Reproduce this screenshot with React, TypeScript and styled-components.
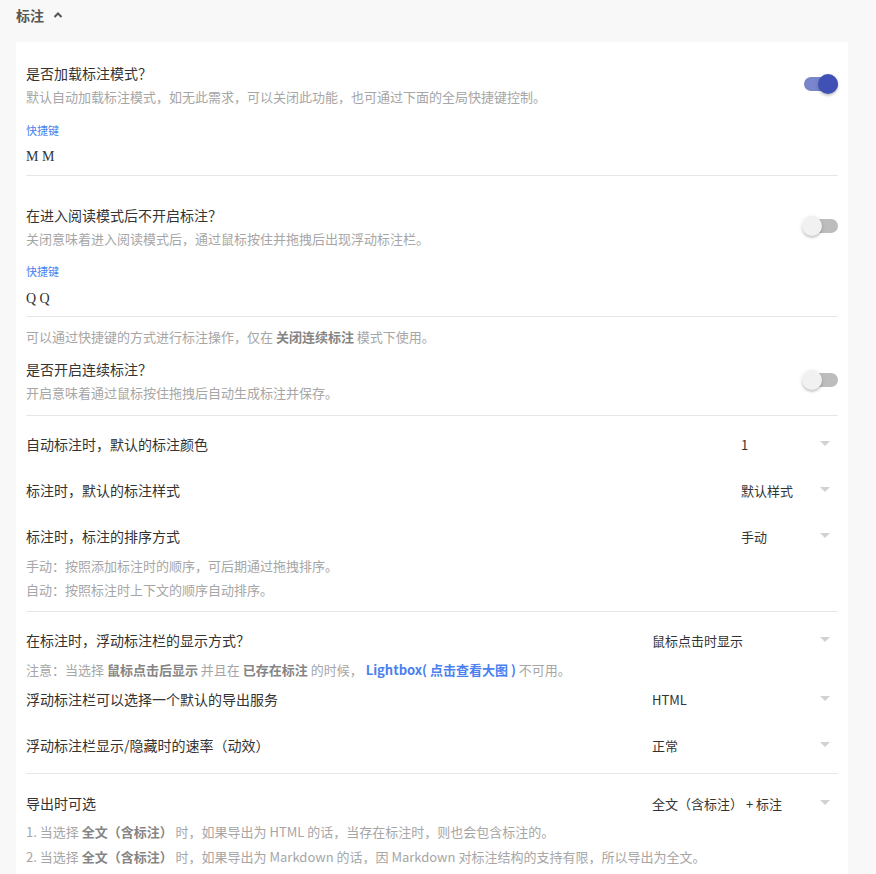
import React from "react";
import styled, { createGlobalStyle } from "styled-components";

const GlobalStyle = createGlobalStyle`
    html, body {
        margin: 0;
        padding: 0;
        background: #f8f8f8;
    }
    body {
        font-family: "Microsoft YaHei", "Noto Sans CJK SC", "Noto Sans", sans-serif;
        color: #333;
        -webkit-font-smoothing: antialiased;
    }
`;

const Page = styled.div`
    width: 876px;
    height: 874px;
    overflow: hidden;
    padding: 0 28px 0 16px;
    box-sizing: border-box;
`;

const Header = styled.div`
    height: 30px;
    display: flex;
    align-items: center;
    gap: 9px;
    font-size: 14px;
    font-weight: bold;
    color: #555;
`;

const Card = styled.div`
    margin-top: 12px;
    background: #fff;
    padding: 0 10px;
`;

const Section = styled.div<{ $top: number; $bottom: number }>`
    padding-top: ${(p) => p.$top}px;
    padding-bottom: ${(p) => p.$bottom}px;
    border-bottom: 1px solid #e6e6e6;
`;

const LastSection = styled.div<{ $top: number }>`
    padding-top: ${(p) => p.$top}px;
`;

const SwitchRow = styled.div<{ $mt?: number }>`
    display: flex;
    align-items: center;
    justify-content: space-between;
    margin-top: ${(p) => p.$mt ?? 0}px;
`;

const Title = styled.div`
    font-size: 14px;
    line-height: 20px;
    color: #333;
`;

const Desc = styled.div<{ $mt?: number; $lh?: number }>`
    font-size: 13px;
    line-height: ${(p) => p.$lh ?? 20}px;
    margin-top: ${(p) => p.$mt ?? 0}px;
    color: #a6a6a6;
    white-space: nowrap;

    b {
        color: #858585;
        font-weight: bold;
    }
`;

const Link = styled.span`
    color: #4a7ff0;
    font-weight: bold;
`;

const ShortcutLabel = styled.div<{ $mt: number }>`
    margin-top: ${(p) => p.$mt}px;
    font-size: 11px;
    line-height: 16px;
    color: #4a7ff0;
`;

const ShortcutValue = styled.div<{ $mt: number }>`
    margin-top: ${(p) => p.$mt}px;
    font-family: "Liberation Serif", "Times New Roman", serif;
    font-size: 14px;
    line-height: 20px;
    color: #333;
`;

const SwitchBox = styled.div`
    position: relative;
    width: 36px;
    height: 20px;
    flex-shrink: 0;
    margin-top: -2px;
`;

const Track = styled.div<{ $on: boolean }>`
    position: absolute;
    left: 2px;
    top: 3px;
    width: 34px;
    height: 14px;
    border-radius: 7px;
    background: ${(p) => (p.$on ? "#7986cb" : "#bdbdbd")};
`;

const Thumb = styled.div<{ $on: boolean }>`
    position: absolute;
    top: 0;
    left: ${(p) => (p.$on ? 16 : 0)}px;
    width: 20px;
    height: 20px;
    border-radius: 50%;
    background: ${(p) => (p.$on ? "#3f51b5" : "#f1f1f1")};
    box-shadow: 0 2px 2px rgba(0, 0, 0, 0.14), 0 1px 4px rgba(0, 0, 0, 0.12);
`;

const Switch = ({ on }: { on: boolean }) => (
    <SwitchBox>
        <Track $on={on} />
        <Thumb $on={on} />
    </SwitchBox>
);

const SelectRow = styled.div<{ $mt?: number }>`
    height: 36px;
    display: flex;
    align-items: center;
    justify-content: space-between;
    margin-top: ${(p) => p.$mt ?? 0}px;
`;

const SelectBox = styled.div<{ $w: number }>`
    width: ${(p) => p.$w}px;
    height: 36px;
    display: flex;
    align-items: center;
    justify-content: space-between;
    font-size: 13px;
    color: #333;
    padding-right: 8px;
    box-sizing: border-box;
`;

const Caret = styled.span`
    width: 0;
    height: 0;
    margin-top: -1px;
    border-left: 5px solid transparent;
    border-right: 5px solid transparent;
    border-top: 5px solid #d2d2d2;
`;

const Select = ({ value, wide }: { value: string; wide?: boolean }) => (
    <SelectBox $w={wide ? 186 : 97}>
        <span>{value}</span>
        <Caret />
    </SelectBox>
);

const ChevronUp = () => (
    <svg width="10" height="8" viewBox="0 0 10 8">
        <path d="M1.5 6 L5 2.5 L8.5 6" fill="none" stroke="#555" strokeWidth="2" />
    </svg>
);

export default function App() {
    return (
        <>
            <GlobalStyle />
            <Page>
                <Header>
                    标注 <ChevronUp />
                </Header>
                <Card>
                    <Section $top={21} $bottom={8}>
                        <SwitchRow>
                            <div>
                                <Title>是否加载标注模式？</Title>
                                <Desc $mt={4}>
                                    默认自动加载标注模式，如无此需求，可以关闭此功能，也可通过下面的全局快捷键控制。
                                </Desc>
                            </div>
                            <Switch on />
                        </SwitchRow>
                        <ShortcutLabel $mt={15}>快捷键</ShortcutLabel>
                        <ShortcutValue $mt={9}>M M</ShortcutValue>
                    </Section>

                    <Section $top={29} $bottom={7}>
                        <SwitchRow>
                            <div>
                                <Title>在进入阅读模式后不开启标注？</Title>
                                <Desc $mt={4}>关闭意味着进入阅读模式后，通过鼠标按住并拖拽后出现浮动标注栏。</Desc>
                            </div>
                            <Switch on={false} />
                        </SwitchRow>
                        <ShortcutLabel $mt={14}>快捷键</ShortcutLabel>
                        <ShortcutValue $mt={10}>Q Q</ShortcutValue>
                    </Section>

                    <Section $top={10} $bottom={12}>
                        <Desc>
                            可以通过快捷键的方式进行标注操作，仅在 <b>关闭连续标注</b> 模式下使用。
                        </Desc>
                        <SwitchRow $mt={12}>
                            <div>
                                <Title>是否开启连续标注？</Title>
                                <Desc $mt={4}>开启意味着通过鼠标按住拖拽后自动生成标注并保存。</Desc>
                            </div>
                            <Switch on={false} />
                        </SwitchRow>
                    </Section>

                    <Section $top={10} $bottom={9}>
                        <SelectRow>
                            <Title>自动标注时，默认的标注颜色</Title>
                            <Select value="1" />
                        </SelectRow>
                        <SelectRow $mt={10}>
                            <Title>标注时，默认的标注样式</Title>
                            <Select value="默认样式" />
                        </SelectRow>
                        <SelectRow $mt={10}>
                            <Title>标注时，标注的排序方式</Title>
                            <Select value="手动" />
                        </SelectRow>
                        <Desc $lh={24}>手动：按照添加标注时的顺序，可后期通过拖拽排序。</Desc>
                        <Desc $lh={24}>自动：按照标注时上下文的顺序自动排序。</Desc>
                    </Section>

                    <Section $top={10} $bottom={10}>
                        <SelectRow>
                            <Title>在标注时，浮动标注栏的显示方式？</Title>
                            <Select value="鼠标点击时显示" wide />
                        </SelectRow>
                        <Desc $mt={2}>
                            注意：当选择 <b>鼠标点击后显示</b> 并且在 <b>已存在标注</b> 的时候，{" "}
                            <Link>Lightbox( 点击查看大图 )</Link> 不可用。
                        </Desc>
                        <SelectRow $mt={1}>
                            <Title>浮动标注栏可以选择一个默认的导出服务</Title>
                            <Select value="HTML" wide />
                        </SelectRow>
                        <SelectRow $mt={10}>
                            <Title>浮动标注栏显示/隐藏时的速率（动效）</Title>
                            <Select value="正常" wide />
                        </SelectRow>
                    </Section>

                    <LastSection $top={11}>
                        <SelectRow>
                            <Title>导出时可选</Title>
                            <Select value="全文（含标注） + 标注" wide />
                        </SelectRow>
                        <Desc $lh={25} $mt={-2}>
                            1. 当选择 <b>全文（含标注）</b> 时，如果导出为 HTML 的话，当存在标注时，则也会包含标注的。
                        </Desc>
                        <Desc $lh={25}>
                            2. 当选择 <b>全文（含标注）</b> 时，如果导出为 Markdown 的话，因 Markdown 对标注结构的支持有限，所以导出为全文。
                        </Desc>
                        <Desc $lh={25}>
                            3. 当选择 <b>全文（含标注）+ 标注</b> 时，如果导出为 Markdown 的话，则会导出全文及标注。
                        </Desc>
                    </LastSection>
                </Card>
            </Page>
        </>
    );
}
